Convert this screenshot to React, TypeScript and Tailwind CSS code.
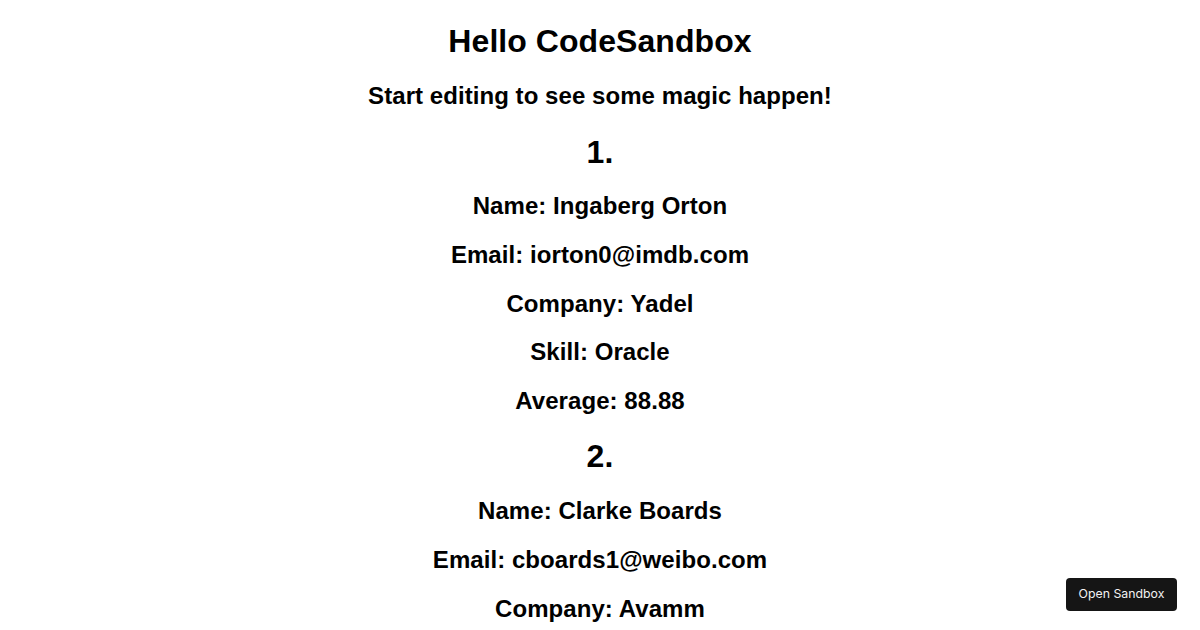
const students = [
  {
    name: "Ingaberg Orton",
    email: "iorton0@imdb.com",
    company: "Yadel",
    skill: "Oracle",
    average: "88.88",
  },
  {
    name: "Clarke Boards",
    email: "cboards1@weibo.com",
    company: "Avamm",
    skill: "Sales",
    average: "77.77",
  },
];

const h1 = "my-[21.44px] text-[32px] leading-[1.2] font-bold";
const h2 = "my-[19.92px] text-[24px] leading-[1.2] font-bold";

export default function App() {
  return (
    <div className="relative h-[630px] overflow-hidden bg-white text-black">
      <div className="px-2 pt-px text-center font-['Liberation_Sans',Arial,sans-serif] tracking-[0.06px]">
        <h1 className={h1}>Hello CodeSandbox</h1>
        <h2 className={h2}>Start editing to see some magic happen!</h2>
        {students.map((s, i) => (
          <div key={s.email}>
            <h1 className={h1}>{i + 1}.</h1>
            <h2 className={h2}>Name: {s.name}</h2>
            <h2 className={h2}>Email: {s.email}</h2>
            <h2 className={h2}>Company: {s.company}</h2>
            <h2 className={h2}>Skill: {s.skill}</h2>
            <h2 className={h2}>Average: {s.average}</h2>
          </div>
        ))}
      </div>
      <button className="absolute right-[23px] bottom-[19px] h-[33px] w-[111px] rounded-[4px] bg-[#151515] font-['Inter',sans-serif] text-[12.3px] text-[#f2f2f2]">
        Open Sandbox
      </button>
    </div>
  );
}
